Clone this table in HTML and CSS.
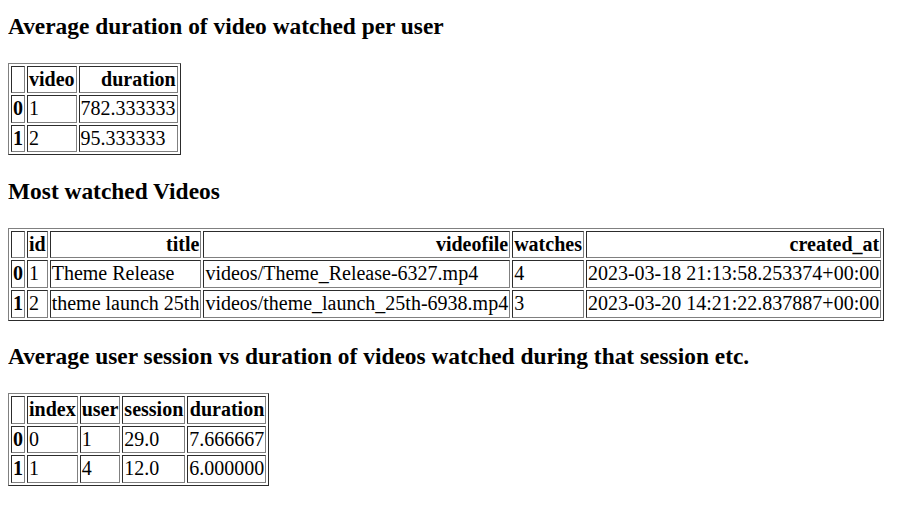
FILE: index.html
```html
<!DOCTYPE html>
<html>
<head>
<meta charset="utf-8">
<link rel="stylesheet" href="styles.css">
</head>
<body>
<h3 class="first">Average duration of video watched per user</h3>
<table class="dataframe">
  <thead>
    <tr class="head-row">
      <th></th>
      <th>video</th>
      <th>duration</th>
    </tr>
  </thead>
  <tbody>
    <tr><th>0</th><td>1</td><td>782.333333</td></tr>
    <tr><th>1</th><td>2</td><td>95.333333</td></tr>
  </tbody>
</table>
<h3>Most watched Videos</h3>
<table class="dataframe">
  <thead>
    <tr class="head-row">
      <th></th>
      <th>id</th>
      <th>title</th>
      <th>videofile</th>
      <th>watches</th>
      <th>created_at</th>
    </tr>
  </thead>
  <tbody>
    <tr><th>0</th><td>1</td><td>Theme Release</td><td>videos/Theme_Release-6327.mp4</td><td>4</td><td>2023-03-18 21:13:58.253374+00:00</td></tr>
    <tr><th>1</th><td>2</td><td>theme launch 25th</td><td>videos/theme_launch_25th-6938.mp4</td><td>3</td><td>2023-03-20 14:21:22.837887+00:00</td></tr>
  </tbody>
</table>
<h3>Average user session vs duration of videos watched during that session etc.</h3>
<table class="dataframe">
  <thead>
    <tr class="head-row">
      <th></th>
      <th>index</th>
      <th>user</th>
      <th>session</th>
      <th>duration</th>
    </tr>
  </thead>
  <tbody>
    <tr><th>0</th><td>0</td><td>1</td><td>29.0</td><td>7.666667</td></tr>
    <tr><th>1</th><td>1</td><td>4</td><td>12.0</td><td>6.000000</td></tr>
  </tbody>
</table>
</body>
</html>
```
FILE: styles.css
```css
html {
  margin: 0;
  padding: 0;
}
body {
  margin: 0 8px 8px;
  padding: 0;
  font-family: "Liberation Serif", "Times New Roman", serif;
  font-size: 20px;
  color: #000;
  background: #fff;
}
h3 {
  font-size: 1.17em;
  font-weight: bold;
  margin: 22.7px 0;
}
h3.first {
  margin-top: 13px;
}
.dataframe {
  border: 1px outset grey;
  border-spacing: 2px;
  border-collapse: separate;
}
.dataframe th,
.dataframe td {
  border: 1px inset grey;
  padding: 1px;
  line-height: 23.6px;
}
.dataframe td {
  text-align: left;
}
.head-row th {
  text-align: right;
}
.dataframe tbody th {
  text-align: left;
}
```
